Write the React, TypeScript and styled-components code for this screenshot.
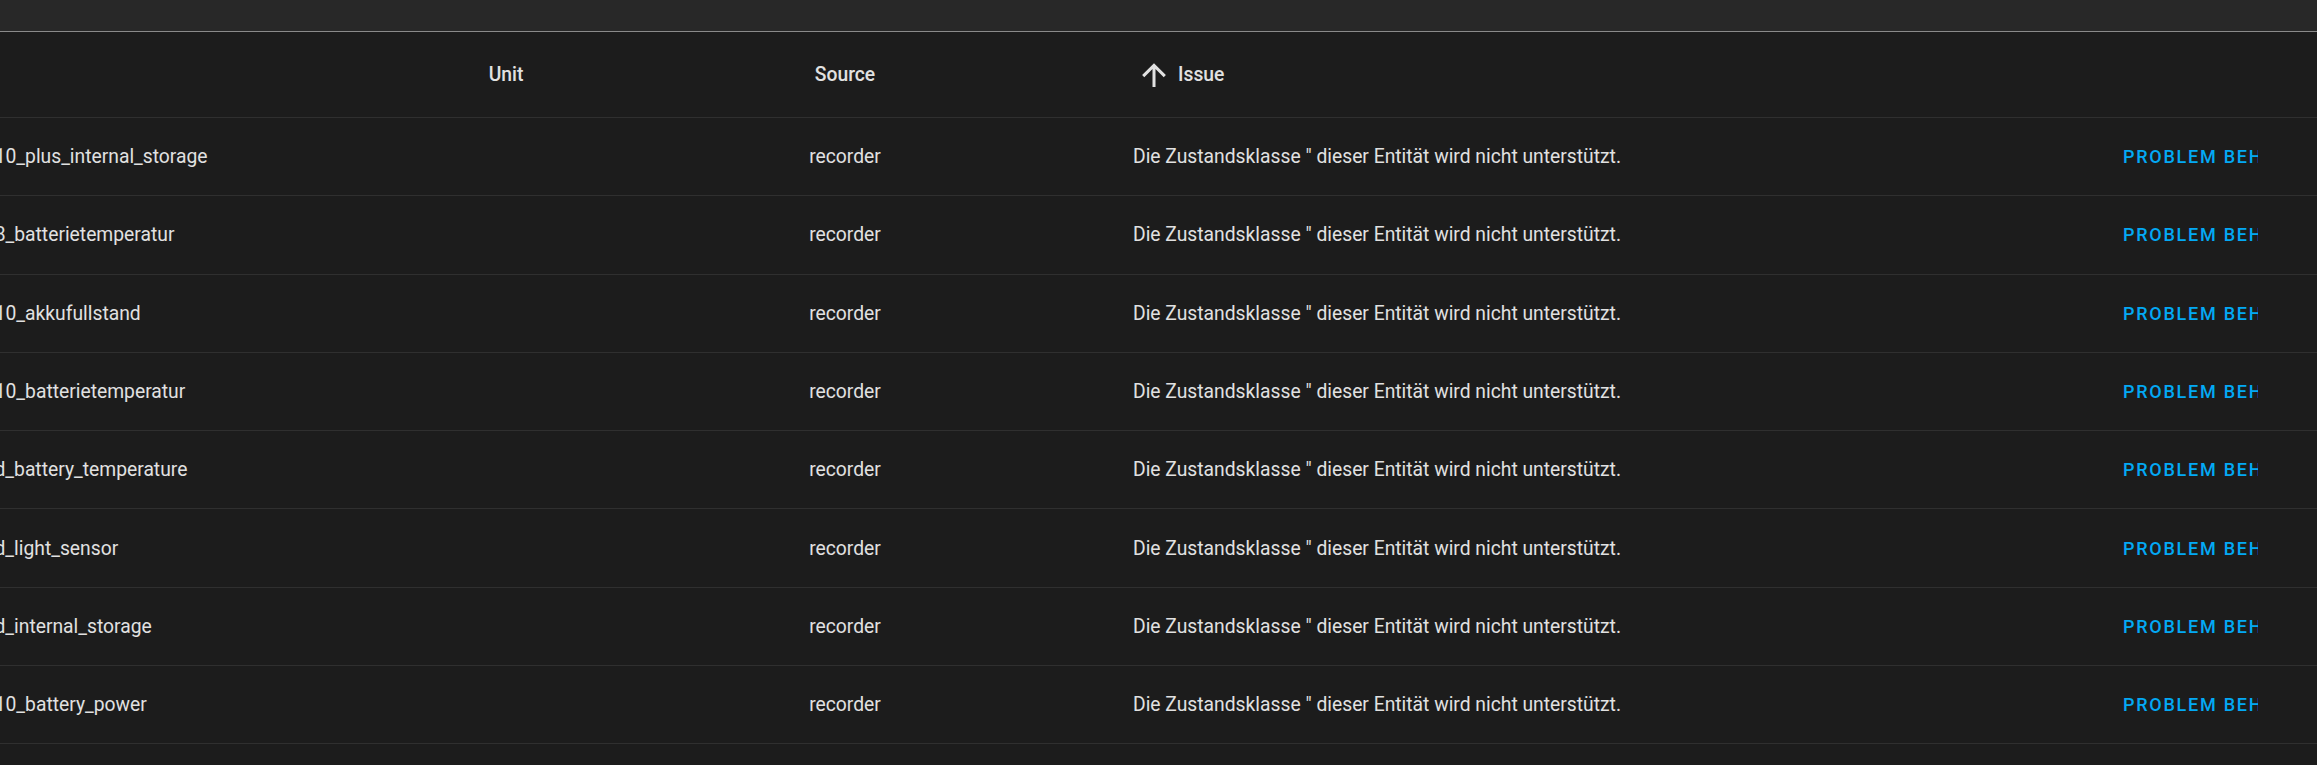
import React, { useLayoutEffect, useRef } from 'react';
import styled, { createGlobalStyle } from 'styled-components';

// how far the table is scrolled to the right
const SCROLL = 204;
const COLS = `${431 + SCROLL}px 150px 528px 978px 230px`;

const GlobalStyle = createGlobalStyle`
  body {
    margin: 0;
    background: #1c1c1c;
    font-family: Roboto, "Noto Sans", sans-serif;
  }
`;

const Page = styled.div`
  width: 2317px;
  height: 765px;
  overflow: hidden;
  background: #1c1c1c;
`;

const TopBar = styled.div`
  height: 31px;
  background: #282828;
  border-bottom: 1px solid #8a8a8a;
`;

const Scroller = styled.div`
  width: 100%;
  overflow: hidden;
`;

const Table = styled.div`
  width: max-content;
`;

const Row = styled.div<{ $header?: boolean }>`
  display: grid;
  grid-template-columns: ${COLS};
  align-items: center;
  box-sizing: border-box;
  height: ${(p) => (p.$header ? '86px' : '78.3px')};
  border-bottom: 1px solid #2f2f2f;
`;

const Cell = styled.div<{ $align?: 'left' | 'center'; $header?: boolean }>`
  display: flex;
  align-items: center;
  justify-content: ${(p) => (p.$align === 'center' ? 'center' : 'flex-start')};
  padding: 0 24px;
  white-space: nowrap;
  overflow: hidden;
  font-size: 19.3px;
  font-weight: ${(p) => (p.$header ? 500 : 400)};
  color: #e1e1e1;
`;

const SortIcon = styled.svg`
  width: 36px;
  height: 36px;
  margin-left: 3px;
  margin-right: 6px;
  flex: none;
  fill: #e1e1e1;
`;

const FixButton = styled.button`
  width: 147px;
  height: 54px;
  padding: 0 12px;
  border: none;
  background: none;
  overflow: hidden;
  white-space: nowrap;
  text-align: left;
  font-family: Roboto, "Noto Sans", sans-serif;
  font-size: 18px;
  font-weight: 500;
  letter-spacing: 1.75px;
  text-transform: uppercase;
  color: #03a9f4;
  cursor: pointer;
`;

const issues = [
  'sensor.lenovo_tab_p10_plus_internal_storage',
  'sensor.lenovo_tab_p8_batterietemperatur',
  'sensor.lenovo_tab_p10_akkufullstand',
  'sensor.lenovo_tab_p10_batterietemperatur',
  'sensor.lenovo_tab_hd_battery_temperature',
  'sensor.lenovo_tab_hd_light_sensor',
  'sensor.lenovo_tab_hd_internal_storage',
  'sensor.lenovo_tab_p10_battery_power',
  'sensor.lenovo_tab_p10_light_sensor',
];

const App = () => {
  const scroller = useRef<HTMLDivElement>(null);

  useLayoutEffect(() => {
    if (scroller.current) scroller.current.scrollLeft = SCROLL;
  }, []);

  return (
    <Page>
      <GlobalStyle />
      <TopBar />
      <Scroller ref={scroller}>
        <Table>
          <Row $header>
            <Cell $header />
            <Cell $header $align="center">Unit</Cell>
            <Cell $header $align="center">Source</Cell>
            <Cell $header>
              <SortIcon viewBox="0 0 24 24">
                <path d="M13,20H11V8L5.5,13.5L4.08,12.08L12,4.16L19.92,12.08L18.5,13.5L13,8V20Z" />
              </SortIcon>
              Issue
            </Cell>
            <Cell $header />
          </Row>
          {issues.map((id) => (
            <Row key={id}>
              <Cell>{id}</Cell>
              <Cell $align="center" />
              <Cell $align="center">recorder</Cell>
              <Cell>Die Zustandsklasse " dieser Entität wird nicht unterstützt.</Cell>
              <Cell>
                <FixButton>Problem beheben</FixButton>
              </Cell>
            </Row>
          ))}
        </Table>
      </Scroller>
    </Page>
  );
};

export default App;
